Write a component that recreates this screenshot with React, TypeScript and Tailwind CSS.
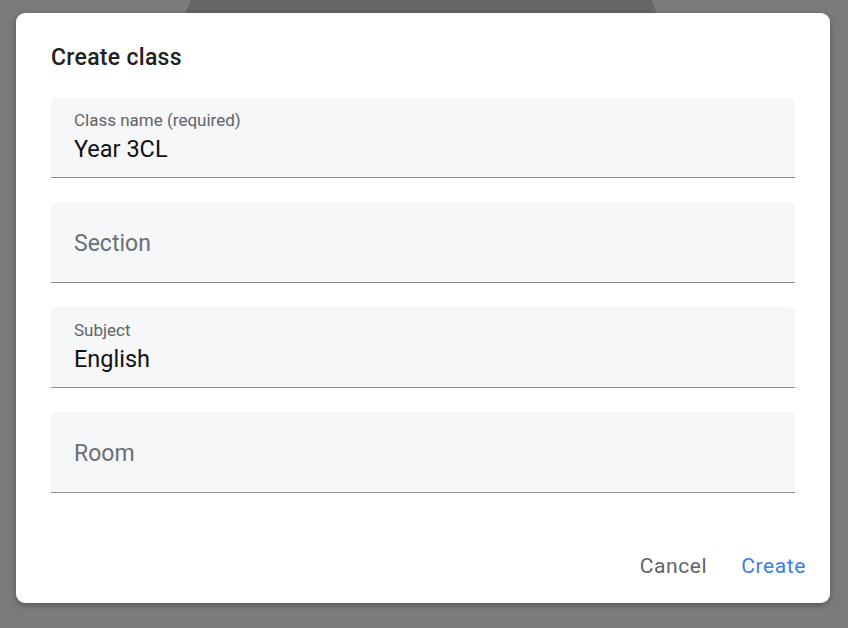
import React from 'react'

type Field = {
  label: string
  value?: string
}

const fields: Field[] = [
  { label: 'Class name (required)', value: 'Year 3CL' },
  { label: 'Section' },
  { label: 'Subject', value: 'English' },
  { label: 'Room' },
]

const TextField = ({ label, value }: Field) => {
  if (value) {
    return (
      <div className="h-[81px] rounded-t-[5px] border-b border-[#8a8c90] bg-[#f6f7f9] px-[23px] pt-[13px]">
        <div className="text-[17px] leading-[20px] text-[#5f6368]">{label}</div>
        <div className="mt-[5px] text-[23.5px] leading-[28px] text-[#111213]">{value}</div>
      </div>
    )
  }
  return (
    <div className="flex h-[81px] items-center rounded-t-[5px] border-b border-[#8a8c90] bg-[#f6f7f9] px-[23px] pt-[3px]">
      <div className="text-[23px] leading-[28px] text-[#6b6f74]">{label}</div>
    </div>
  )
}

export default function App() {
  return (
    <div
      className="relative h-[628px] w-[848px] overflow-hidden bg-[#7b7b7b]"
      style={{ fontFamily: 'Roboto, "Noto Sans", sans-serif' }}
    >
      {/* dimmed page content behind the dialog */}
      <div className="absolute left-[168px] top-[-148px] h-[506px] w-[506px] rounded-full bg-[#666666]" />

      <div className="relative flex pl-[16px] pt-[13px]">
        <div className="flex h-[590px] w-[814px] flex-col rounded-[9px] bg-white shadow-[0_2px_6px_rgba(0,0,0,0.3)]">
          <div className="px-[35px] pt-[30px]">
            <h1 className="text-[23px] font-medium leading-[30px] tracking-[0.3px] text-[#202124]">
              Create class
            </h1>
            <div className="mt-[24px] flex flex-col gap-[24px]">
              {fields.map((f) => (
                <TextField key={f.label} label={f.label} value={f.value} />
              ))}
            </div>
          </div>
          <div className="mt-auto flex justify-end gap-[34px] pb-[25px] pr-[24px]">
            <button className="text-[21px] leading-[24px] tracking-[0.6px] text-[#5f6368]">
              Cancel
            </button>
            <button className="text-[21px] leading-[24px] tracking-[0.6px] text-[#3b7ee8]">
              Create
            </button>
          </div>
        </div>
      </div>
    </div>
  )
}
